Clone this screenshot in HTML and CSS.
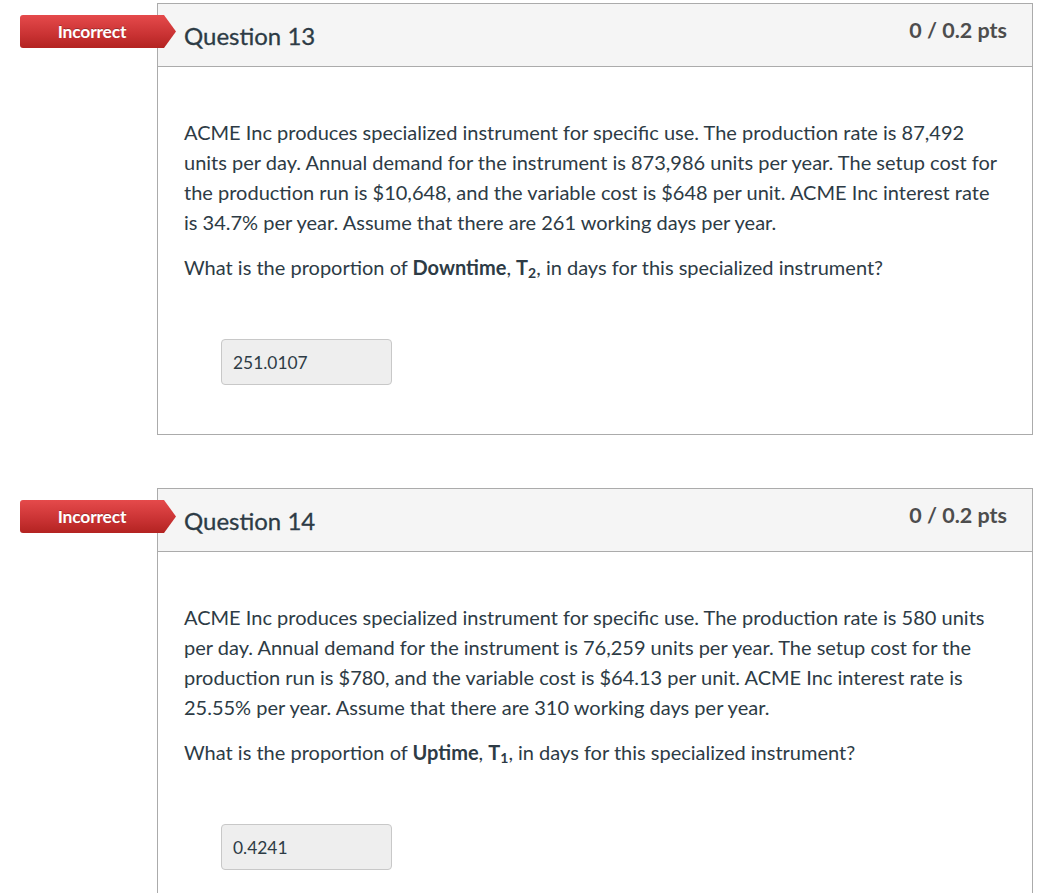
FILE: index.html
```html
<!DOCTYPE html>
<html>
<head>
<meta charset="utf-8">
<link rel="stylesheet" href="styles.css">
</head>
<body>
<div class="page">
  <div class="question">
    <div class="badge">Incorrect</div>
    <div class="q-header">
      <span class="q-title">Question 13</span>
      <span class="q-points">0 / 0.2 pts</span>
    </div>
    <div class="q-body">
      <p>ACME Inc produces specialized instrument for specific use. The production rate is 87,492 units per day. Annual demand for the instrument is 873,986 units per year. The setup cost for the production run is $10,648, and the variable cost is $648 per unit. ACME Inc interest rate is 34.7% per year. Assume that there are 261 working days per year.</p>
      <p>What is the proportion of <b>Downtime</b>, <b>T<sub>2</sub></b>, in days for this specialized instrument?</p>
      <div class="answer">251.0107</div>
    </div>
  </div>
  <div class="question">
    <div class="badge">Incorrect</div>
    <div class="q-header">
      <span class="q-title">Question 14</span>
      <span class="q-points">0 / 0.2 pts</span>
    </div>
    <div class="q-body">
      <p>ACME Inc produces specialized instrument for specific use. The production rate is 580 units per day. Annual demand for the instrument is 76,259 units per year. The setup cost for the production run is $780, and the variable cost is $64.13 per unit. ACME Inc interest rate is 25.55% per year. Assume that there are 310 working days per year.</p>
      <p>What is the proportion of <b>Uptime</b>, <b>T<sub>1</sub></b>, in days for this specialized instrument?</p>
      <div class="answer">0.4241</div>
    </div>
  </div>
</div>
</body>
</html>
```

FILE: styles.css
```css
html, body {
  margin: 0;
  padding: 0;
  background: #fff;
}
body {
  font-family: Lato, "Open Sans", "Liberation Sans", sans-serif;
  color: #2d3b45;
}
.page {
  padding: 3px 0 0 157px;
  width: 876px;
  display: flex;
  flex-direction: column;
  gap: 53px;
}
.question {
  position: relative;
  border: 1px solid #ababab;
  background: #fff;
}
.badge {
  position: absolute;
  left: -138px;
  top: 11px;
  width: 156px;
  height: 33px;
  box-sizing: border-box;
  padding-right: 12px;
  display: flex;
  align-items: center;
  justify-content: center;
  color: #fff;
  font-weight: bold;
  font-size: 17.5px;
  letter-spacing: -0.2px;
  text-shadow: 0 -1px 0 rgba(0,0,0,0.25);
  background: linear-gradient(to bottom, #e54a4b 0%, #c93233 60%, #b32321 100%);
  border-radius: 3px 0 0 3px;
  clip-path: polygon(0 0, 144px 0, 100% 50%, 144px 100%, 0 100%);
}
.q-header {
  height: 62px;
  background: #f5f5f5;
  border-bottom: 1px solid #ababab;
  display: flex;
  justify-content: space-between;
  align-items: center;
  padding: 0 25px 0 26px;
}
.q-title {
  font-size: 24px;
  color: #2d3b45;
  margin-top: 0;
  -webkit-text-stroke: 0.3px #2d3b45;
}
.q-points {
  font-size: 21.5px;
  font-weight: bold;
  color: #4d4d4d;
  margin-top: -10px;
}
.q-body {
  padding: 50px 26px 49px 26px;
}
.q-body p {
  margin: 0 0 15px 0;
  font-size: 20px;
  line-height: 30px;
}
.q-body sub {
  font-size: 14px;
  vertical-align: -3px;
  line-height: 0;
}
.answer {
  margin: 57px 0 0 37px;
  width: 171px;
  height: 46px;
  box-sizing: border-box;
  background: #eeeeee;
  border: 1px solid #c8c8c8;
  border-radius: 4px;
  padding: 0 11px;
  display: flex;
  align-items: center;
  font-size: 17.4px;
  color: #2d3b45;
}
```
